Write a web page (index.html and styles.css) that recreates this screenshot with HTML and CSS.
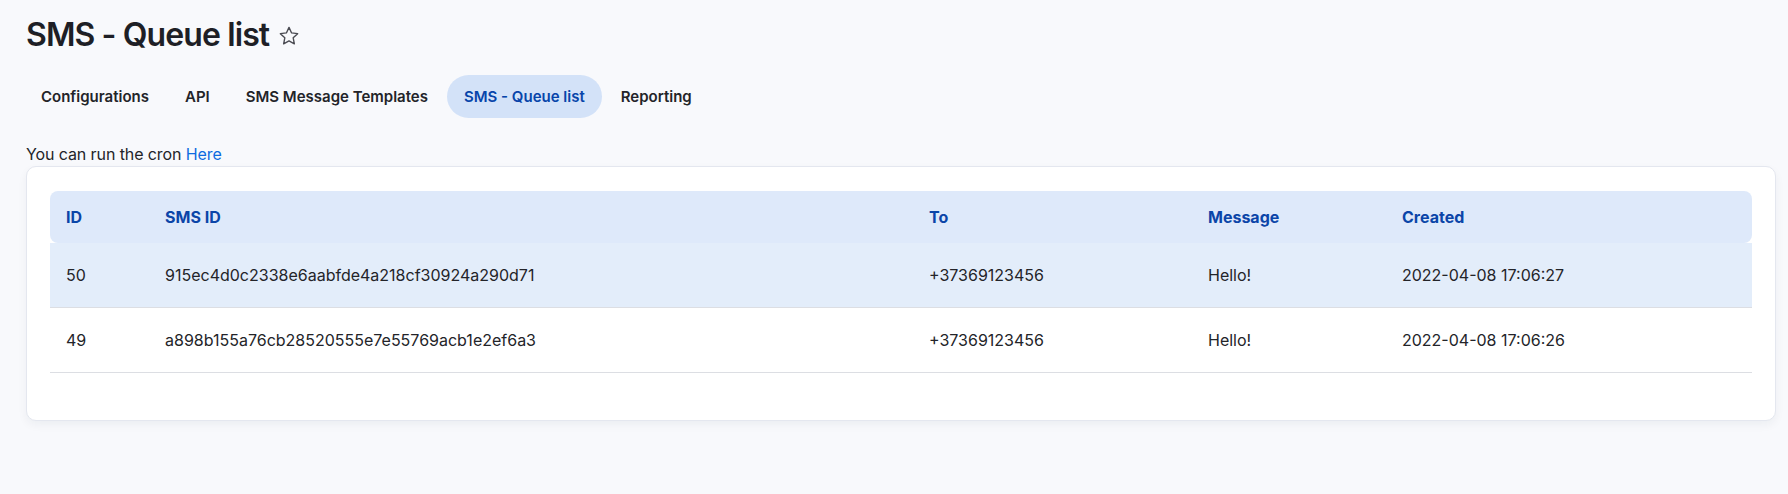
FILE: index.html
```
<!DOCTYPE html>
<html lang="en">

<head>
    <meta charset="UTF-8">
    <title>SMS - Queue list</title>
    <link rel="stylesheet" href="styles.css">
</head>

<body>
    <div class="page">
        <h1 class="page-title">
            <span>SMS - Queue list</span>
            <button class="btn-fav" title="Add to Default shortcuts">
                <svg viewBox="0 0 24 24" width="22" height="22">
                    <path d="M12 2.6l2.85 6.05 6.6.8-4.88 4.55 1.27 6.55L12 17.3l-5.84 3.25 1.27-6.55L2.55 9.45l6.6-.8z" fill="none" stroke="#4a4b52" stroke-width="1.5" stroke-linejoin="round"/>
                </svg>
            </button>
        </h1>

        <ul class="tabs">
            <li><a href="#">Configurations</a></li>
            <li><a href="#">API</a></li>
            <li><a href="#">SMS Message Templates</a></li>
            <li class="active"><a href="#">SMS - Queue list</a></li>
            <li><a href="#">Reporting</a></li>
        </ul>

        <p class="cron">You can run the cron <a href="#">Here</a></p>

        <div class="card">
            <table class="queue">
                <thead>
                    <tr>
                        <th class="col-id">ID</th>
                        <th class="col-sms">SMS ID</th>
                        <th class="col-to">To</th>
                        <th class="col-msg">Message</th>
                        <th class="col-created">Created</th>
                    </tr>
                </thead>
                <tbody>
                    <tr class="selected">
                        <td>50</td>
                        <td>915ec4d0c2338e6aabfde4a218cf30924a290d71</td>
                        <td>+37369123456</td>
                        <td>Hello!</td>
                        <td>2022-04-08 17:06:27</td>
                    </tr>
                    <tr>
                        <td>49</td>
                        <td>a898b155a76cb28520555e7e55769acb1e2ef6a3</td>
                        <td>+37369123456</td>
                        <td>Hello!</td>
                        <td>2022-04-08 17:06:26</td>
                    </tr>
                </tbody>
            </table>
        </div>
    </div>
</body>

</html>
```

FILE: styles.css
```
body {
    margin: 0;
    background-color: #f8f9fc;
    color: #232429;
    font-family: Inter, "Noto Sans", sans-serif;
    font-size: 16px;
}

ul {
    list-style: none;
    margin: 0;
    padding: 0;
}

a {
    text-decoration: none;
}

.page {
    padding: 15px 12px 40px 26px;
}

.page-title {
    display: flex;
    align-items: center;
    gap: 9px;
    margin: 0;
    font-size: 32px;
    line-height: 40px;
    font-weight: 600;
    letter-spacing: -0.028em;
    color: #1e1f26;
}

.btn-fav {
    display: flex;
    padding: 0;
    border: 0;
    background: none;
    margin-top: 2px;
}

.tabs {
    display: flex;
    gap: 2px;
    margin: 20px 0 0 -2px;
}

.tabs a {
    display: block;
    padding: 0 17px;
    line-height: 43px;
    border-radius: 22px;
    font-size: 15px;
    font-weight: 600;
    color: #232429;
}

.tabs .active a {
    background-color: #d3e2f8;
    color: #0745aa;
}

.cron {
    margin: 24px 0 0;
    line-height: 24px;
    letter-spacing: -0.1px;
}

.cron a {
    color: #0f6be0;
}

.card {
    padding: 24px 23px 47px;
    background-color: #fff;
    border: 1px solid #e4e7ef;
    border-radius: 10px;
    box-shadow: 0 4px 10px rgba(20, 30, 60, 0.05);
}

.queue {
    width: 100%;
    border-collapse: separate;
    border-spacing: 0;
    text-align: left;
}

.queue th {
    padding: 16px;
    line-height: 20px;
    font-weight: 700;
    color: #0b45a8;
    background-color: #dee9fa;
}

.queue th:first-child {border-radius: 8px 0 0 8px;}
.queue th:last-child {border-radius: 0 8px 8px 0;}

.queue td {
    padding: 22px 16px;
    line-height: 20px;
    border-bottom: 1px solid #dcdee3;
}

.queue .selected td {background-color: #e3edfa;}

.col-id {width: 67px;}
.col-sms {width: 732px;}
.col-to {width: 247px;}
.col-msg {width: 162px;}
```
